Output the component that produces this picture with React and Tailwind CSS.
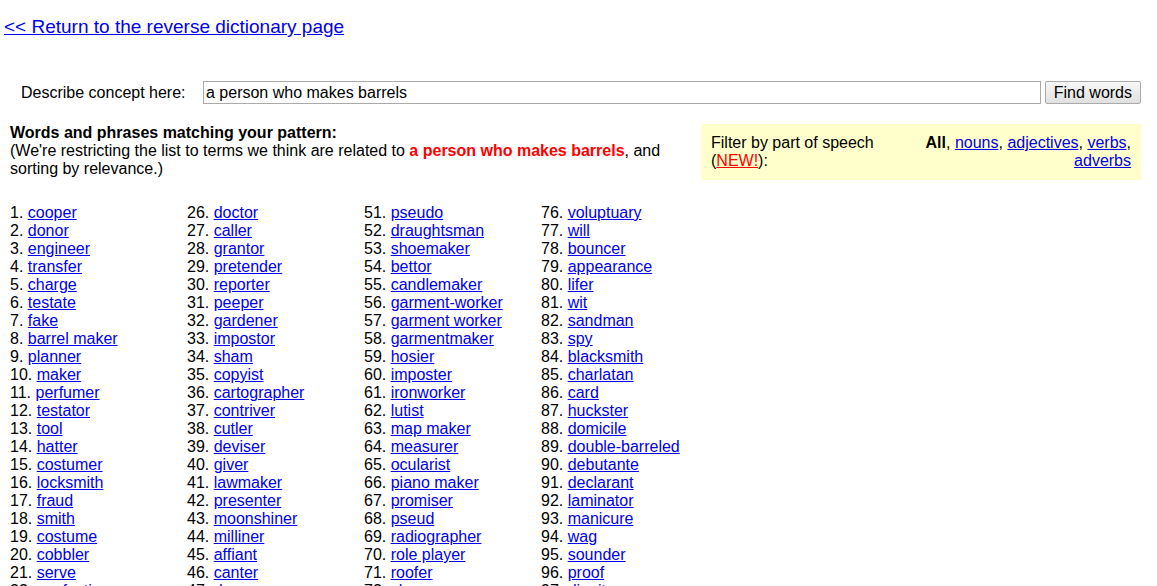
const cols = [
["cooper","donor","engineer","transfer","charge","testate","fake","barrel maker","planner","maker","perfumer","testator","tool","hatter","costumer","locksmith","fraud","smith","costume","cobbler","serve","confection"],
["doctor","caller","grantor","pretender","reporter","peeper","gardener","impostor","sham","copyist","cartographer","contriver","cutler","deviser","giver","lawmaker","presenter","moonshiner","milliner","affiant","canter","drummer"],
["pseudo","draughtsman","shoemaker","bettor","candlemaker","garment-worker","garment worker","garmentmaker","hosier","imposter","ironworker","lutist","map maker","measurer","ocularist","piano maker","promiser","pseud","radiographer","role player","roofer","shammer"],
["voluptuary","will","bouncer","appearance","lifer","wit","sandman","spy","blacksmith","charlatan","card","huckster","domicile","double-barreled","debutante","declarant","laminator","manicure","wag","sounder","proof","dignitary"],
];
export default function App(){
  return (
    <div className="h-[586px] overflow-hidden bg-white text-black text-[16px] leading-[18px]" style={{fontFamily:'"Liberation Sans", Arial, sans-serif'}}>
      <div className="pl-[4px] pt-[16px]">
        <a href="#" className="text-[19px] leading-[22px] text-[#0000ee] underline">&lt;&lt; Return to the reverse dictionary page</a>
      </div>
      <div className="flex items-center mt-[43px] pl-[21px] pr-[16px]">
        <span className="w-[182px]">Describe concept here:</span>
        <div className="flex-1 h-[23px] border border-[#aaa] px-[2px] flex items-center">a person who makes barrels</div>
        <button className="ml-[4px] h-[23px] px-[8px] border border-[#aaa] rounded-[2px] bg-gradient-to-b from-[#f8f8f8] to-[#e0e0e0]">Find words</button>
      </div>
      <div className="flex mt-[20px] pl-[10px] pr-[16px]">
        <div className="w-[660px]">
          <div className="font-bold">Words and phrases matching your pattern:</div>
          <div>(We're restricting the list to terms we think are related to <span className="text-[#ff0000] font-bold">a person who makes barrels</span>, and sorting by relevance.)</div>
        </div>
        <div className="ml-[31px] flex-1 bg-[#ffffcc] h-[56px] px-[10px] pt-[10px] flex justify-between">
          <div>Filter by part of speech<br/>(<a href="#" className="text-[#ff0000] underline">NEW!</a>):</div>
          <div className="text-right"><b>All</b>, <a href="#" className="text-[#0000ee] underline">nouns</a>, <a href="#" className="text-[#0000ee] underline">adjectives</a>, <a href="#" className="text-[#0000ee] underline">verbs</a>,<br/><a href="#" className="text-[#0000ee] underline">adverbs</a></div>
        </div>
      </div>
      <div className="flex mt-[24px] pl-[10px]">
        {cols.map((c,ci)=>(
          <div key={ci} className="w-[177px]">
            {c.map((w,i)=>(
              <div key={i}>{ci*25+i+1}. <a href="#" className="text-[#0000ee] underline">{w}</a></div>
            ))}
          </div>
        ))}
      </div>
    </div>
  );
}
